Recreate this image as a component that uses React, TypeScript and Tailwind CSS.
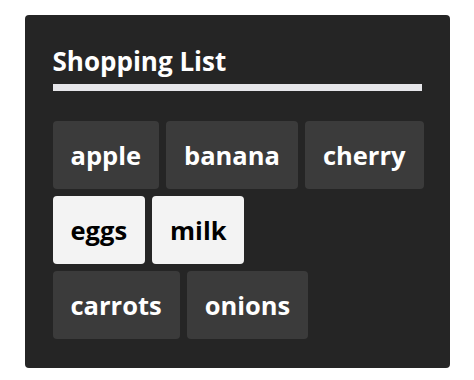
import React from "react";

const groups: { name: string; selected: boolean }[][] = [
  [
    { name: "apple", selected: false },
    { name: "banana", selected: false },
    { name: "cherry", selected: false },
  ],
  [
    { name: "eggs", selected: true },
    { name: "milk", selected: true },
  ],
  [
    { name: "carrots", selected: false },
    { name: "onions", selected: false },
  ],
];

export default function App() {
  return (
    <div className="min-h-screen bg-white pt-[15px] font-['Open_Sans',sans-serif]">
      <div className="mx-auto w-[425px] rounded bg-[#252525] px-[28px] pt-[29px] pb-[29px]">
        <h2 className="text-[26px] font-bold leading-[34px] text-white">Shopping List</h2>
        <div className="mt-[6px] h-[7px] bg-[#e6e6ea]" />
        <div className="mt-[30px] flex flex-col gap-[7px]">
          {groups.map((row, i) => (
            <div key={i} className="flex gap-[7px]">
              {row.map((item) => (
                <button
                  key={item.name}
                  type="button"
                  className={
                    item.selected
                      ? "flex h-[68px] items-center rounded px-[18px] text-[25.5px] font-bold text-black bg-[#f3f3f3]"
                      : "flex h-[68px] items-center rounded px-[18px] text-[25.5px] font-bold text-white bg-[#3b3b3b]"
                  }
                >
                  {item.name}
                </button>
              ))}
            </div>
          ))}
        </div>
      </div>
    </div>
  );
}
